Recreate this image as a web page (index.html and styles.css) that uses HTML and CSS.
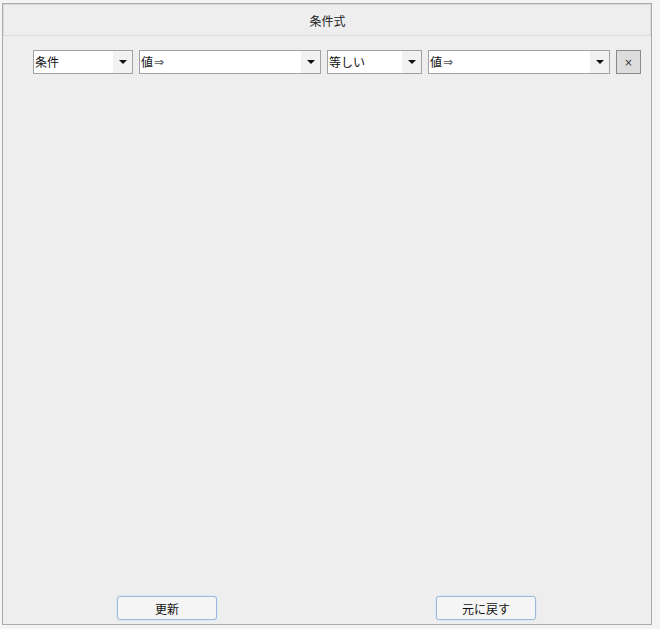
FILE: index.html
```html
<!DOCTYPE html>
<html lang="ja">
<head>
<meta charset="utf-8">
<title>条件式</title>
<link rel="stylesheet" href="styles.css">
</head>
<body>
<div class="frame">
  <div class="header">条件式</div>
  <div class="row">
    <div class="select w100"><span class="val">条件</span><span class="arrow"></span></div>
    <div class="select w182"><span class="val">値<span class="imp">⇒</span></span><span class="arrow"></span></div>
    <div class="select w95"><span class="val">等しい</span><span class="arrow"></span></div>
    <div class="select w182"><span class="val">値<span class="imp">⇒</span></span><span class="arrow"></span></div>
    <div class="close">×</div>
  </div>
  <div class="spacer"></div>
  <div class="footer">
    <button class="btn">更新</button>
    <button class="btn">元に戻す</button>
  </div>
</div>
</body>
</html>
```
FILE: styles.css
```css
html, body {
  margin: 0;
  padding: 0;
  background: #f4f4f4;
  font-family: "Noto Sans CJK JP", "Noto Sans", sans-serif;
  font-size: 12px;
  color: #000;
}
.frame {
  box-sizing: border-box;
  margin: 3px 0 0 2px;
  width: 650px;
  height: 622px;
  border: 1px solid #ababab;
  background: #eeeeee;
  display: flex;
  flex-direction: column;
}
.header {
  box-sizing: border-box;
  height: 32px;
  border: 1px solid #dadada;
  display: flex;
  align-items: center;
  justify-content: center;
  color: #222;
  padding-left: 1px;
}
.row {
  display: flex;
  gap: 6px;
  margin-top: 14px;
  padding-left: 30px;
}
.select {
  box-sizing: border-box;
  height: 24px;
  border: 1px solid #a2a2a2;
  background: #fff;
  display: flex;
  align-items: stretch;
}
.w100 { width: 100px; }
.w182 { width: 182px; }
.w95 { width: 95px; }
.val {
  flex: 1;
  display: flex;
  align-items: center;
  padding-left: 1px;
  line-height: 1;
  color: #111;
}
.imp {
  font-family: "DejaVu Sans", sans-serif;
  font-size: 12px;
  color: #555;
  margin-left: 1px;
}
.arrow {
  width: 19px;
  background: #f1f1f1;
  display: flex;
  align-items: center;
  justify-content: center;
}
.arrow::before {
  content: "";
  width: 0;
  height: 0;
  border-left: 4px solid transparent;
  border-right: 4px solid transparent;
  border-top: 4px solid #111;
  margin-left: 1px;
}
.close {
  box-sizing: border-box;
  width: 25px;
  height: 24px;
  border: 1px solid #8a8a8a;
  background: #dddddd;
  display: flex;
  align-items: center;
  justify-content: center;
  font-size: 10px;
  color: #333;
  font-family: "DejaVu Sans", sans-serif;
}
.spacer { flex: 1; }
.footer {
  display: flex;
  gap: 219px;
  padding-left: 114px;
  margin-bottom: 4px;
}
.btn {
  box-sizing: border-box;
  width: 100px;
  height: 24px;
  border: 1px solid #9db8d8;
  border-radius: 3px;
  background: #f5f5f5;
  box-shadow: 0 0 0 1px #e0e9f3;
  font-family: "Noto Sans CJK JP", "Noto Sans", sans-serif;
  font-size: 12px;
  color: #111;
  padding: 0;
}
```
